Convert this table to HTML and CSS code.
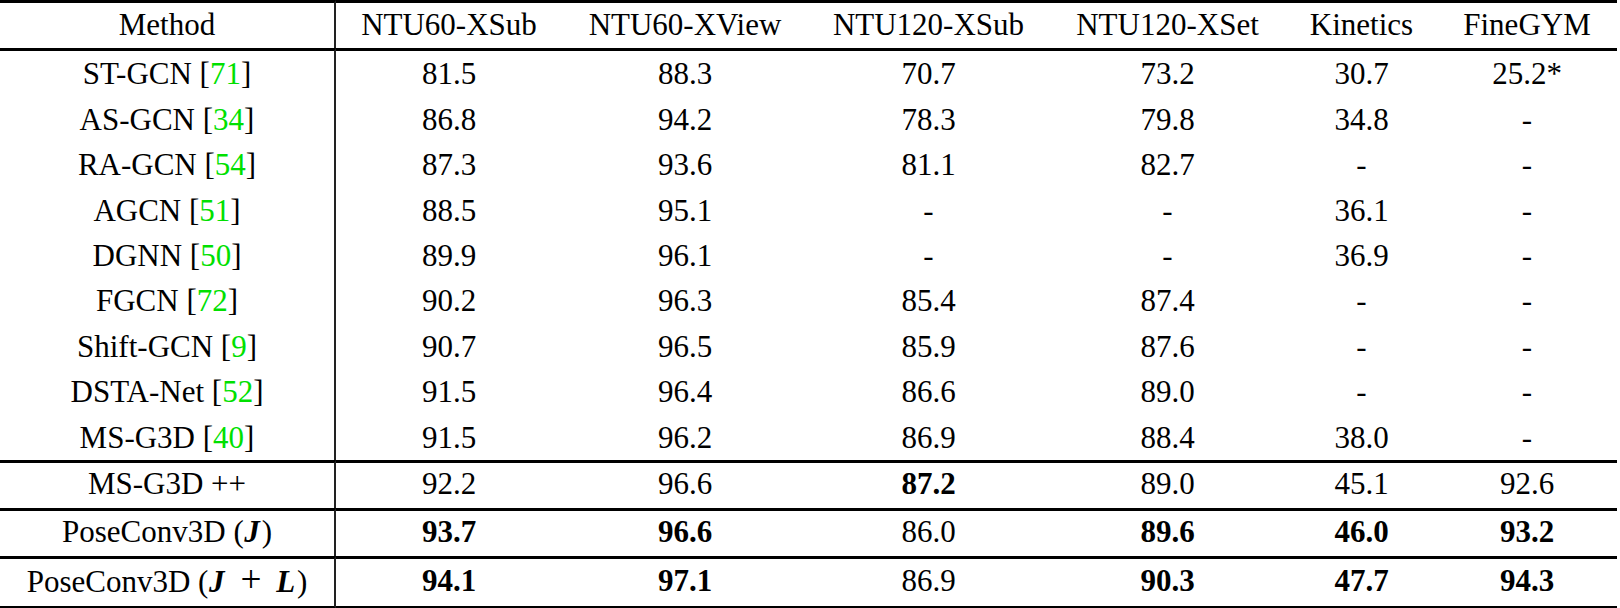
FILE: index.html
```html
<!DOCTYPE html>
<html lang="en">
<head>
    <meta charset="utf-8"/>
    <title>Skeleton-based action recognition results</title>
    <link rel="stylesheet" href="styles.css">
</head>
<body>
    <table class="results">
        <colgroup>
            <col class="col-method">
            <col class="col-xsub60">
            <col class="col-xview60">
            <col class="col-xsub120">
            <col class="col-xset120">
            <col class="col-kinetics">
            <col class="col-gym">
        </colgroup>
        <thead>
            <tr>
                <th class="method">Method</th>
                <th>NTU60-XSub</th>
                <th>NTU60-XView</th>
                <th>NTU120-XSub</th>
                <th>NTU120-XSet</th>
                <th>Kinetics</th>
                <th>FineGYM</th>
            </tr>
        </thead>
        <tbody class="prior">
            <tr class="first">
                <td class="method">ST-GCN [<span class="ref">71</span>]</td>
                <td>81.5</td><td>88.3</td><td>70.7</td><td>73.2</td><td>30.7</td><td>25.2*</td>
            </tr>
            <tr>
                <td class="method">AS-GCN [<span class="ref">34</span>]</td>
                <td>86.8</td><td>94.2</td><td>78.3</td><td>79.8</td><td>34.8</td><td>-</td>
            </tr>
            <tr>
                <td class="method">RA-GCN [<span class="ref">54</span>]</td>
                <td>87.3</td><td>93.6</td><td>81.1</td><td>82.7</td><td>-</td><td>-</td>
            </tr>
            <tr>
                <td class="method">AGCN [<span class="ref">51</span>]</td>
                <td>88.5</td><td>95.1</td><td>-</td><td>-</td><td>36.1</td><td>-</td>
            </tr>
            <tr>
                <td class="method">DGNN [<span class="ref">50</span>]</td>
                <td>89.9</td><td>96.1</td><td>-</td><td>-</td><td>36.9</td><td>-</td>
            </tr>
            <tr>
                <td class="method">FGCN [<span class="ref">72</span>]</td>
                <td>90.2</td><td>96.3</td><td>85.4</td><td>87.4</td><td>-</td><td>-</td>
            </tr>
            <tr>
                <td class="method">Shift-GCN [<span class="ref">9</span>]</td>
                <td>90.7</td><td>96.5</td><td>85.9</td><td>87.6</td><td>-</td><td>-</td>
            </tr>
            <tr>
                <td class="method">DSTA-Net [<span class="ref">52</span>]</td>
                <td>91.5</td><td>96.4</td><td>86.6</td><td>89.0</td><td>-</td><td>-</td>
            </tr>
            <tr>
                <td class="method">MS-G3D [<span class="ref">40</span>]</td>
                <td>91.5</td><td>96.2</td><td>86.9</td><td>88.4</td><td>38.0</td><td>-</td>
            </tr>
        </tbody>
        <tbody class="ours">
            <tr>
                <td class="method">MS-G3D ++</td>
                <td>92.2</td><td>96.6</td><td class="best">87.2</td><td>89.0</td><td>45.1</td><td>92.6</td>
            </tr>
            <tr>
                <td class="method">PoseConv3D (<span class="sym">J</span>)</td>
                <td class="best">93.7</td><td class="best">96.6</td><td>86.0</td><td class="best">89.6</td><td class="best">46.0</td><td class="best">93.2</td>
            </tr>
            <tr>
                <td class="method">PoseConv3D (<span class="sym">J</span><span class="op">+</span><span class="sym">L</span>)</td>
                <td class="best">94.1</td><td class="best">97.1</td><td>86.9</td><td class="best">90.3</td><td class="best">47.7</td><td class="best">94.3</td>
            </tr>
        </tbody>
    </table>
</body>
</html>
```

FILE: styles.css
```css
body {
    margin: 0;
    background: #fff;
    color: #000;
    font-family: 'Liberation Serif', 'Times New Roman', serif;
}

.results {
    width: 1617px;
    table-layout: fixed;
    border-collapse: separate;
    border-spacing: 0;
    font-size: 31px;
}

.col-method { width: 336px; }
.col-xsub60 { width: 226px; }
.col-xview60 { width: 246px; }
.col-xsub120 { width: 241px; }
.col-xset120 { width: 237px; }
.col-kinetics { width: 151px; }
.col-gym { width: 180px; }

th,
td {
    padding: 0;
    text-align: center;
    white-space: nowrap;
    font-weight: normal;
}

th {
    border-top: 3px solid #000;
    line-height: 44px;
    padding-bottom: 1.4px;
}

.prior td {
    line-height: 45.4px;
}

.prior .first td {
    border-top: 3px solid #000;
}

.ours td {
    border-top: 3px solid #000;
    line-height: 41px;
    padding-bottom: 4px;
}

.ours tr:last-child td {
    border-bottom: 3px solid #000;
}

.method {
    border-right: 2px solid #222;
}

.ref {
    color: #00e000;
}

.best {
    font-weight: bold;
}

.sym {
    font-weight: bold;
    font-style: italic;
    padding: 0 0.06em 0 0.02em;
}

.op {
    font-size: 1.2em;
    padding: 0 0.38em;
}
```
